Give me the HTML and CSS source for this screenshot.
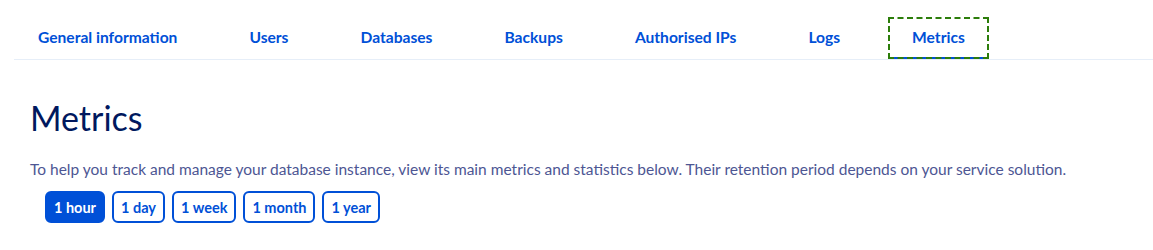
FILE: index.html
```html
<!DOCTYPE html>
<html lang="en">
<head>
  <meta charset="UTF-8">
  <meta name="viewport" content="width=device-width, initial-scale=1.0">
  <title>Metrics</title>
  <link rel="stylesheet" href="styles.css">
</head>
<body>
  <!-- Tabs -->
  <nav class="tabs">
    <a class="tab" href="#">General information</a>
    <a class="tab" href="#">Users</a>
    <a class="tab" href="#">Databases</a>
    <a class="tab" href="#">Backups</a>
    <a class="tab" href="#">Authorised IPs</a>
    <a class="tab" href="#">Logs</a>
    <a class="tab active" href="#">Metrics</a>
  </nav>

  <main class="content">
    <h1 class="title">Metrics</h1>
    <p class="intro">To help you track and manage your database instance, view its main metrics and statistics below. Their retention period depends on your service solution.</p>

    <div class="periods">
      <button class="period selected" type="button">1 hour</button>
      <button class="period" type="button">1 day</button>
      <button class="period" type="button">1 week</button>
      <button class="period" type="button">1 month</button>
      <button class="period" type="button">1 year</button>
    </div>
  </main>
</body>
</html>
```

FILE: styles.css
```css
body {
  font-family: 'Lato', 'Open Sans', sans-serif;
  margin: 0;
  padding: 0;
  background-color: #fff;
}

/* Tabs */
.tabs {
  display: flex;
  gap: 24px;
  margin-left: 14px;
  padding-top: 17px;
  border-bottom: 1px solid #e6eef8;
}

.tab {
  display: flex;
  align-items: center;
  height: 42px;
  padding: 0 24px 3px;
  box-sizing: border-box;
  color: #0050d7;
  font-size: 15.6px;
  font-weight: bold;
  text-decoration: none;
}

.tab.active {
  padding-bottom: 1px;
  border-bottom: 2px solid #0050d7;
  outline: 2px dashed #2c7d0a;
  outline-offset: -2px;
}

/* Content */
.content {
  padding: 0 30px;
}

.title {
  margin: 37px 0 0;
  font-size: 34px;
  font-weight: normal;
  line-height: 42px;
  color: #00185e;
}

.intro {
  margin: 19px 0 0;
  font-size: 15.5px;
  line-height: 22px;
  color: #4d5693;
}

.periods {
  display: flex;
  gap: 7px;
  margin: 11px 0 0 15px;
}

.period {
  height: 32px;
  padding: 0 7px;
  border: 2px solid #0050d7;
  border-radius: 6px;
  background-color: #fff;
  color: #0050d7;
  font-family: inherit;
  font-size: 14.5px;
  font-weight: bold;
  cursor: pointer;
}

.period.selected {
  background-color: #0050d7;
  color: #fff;
}
```
